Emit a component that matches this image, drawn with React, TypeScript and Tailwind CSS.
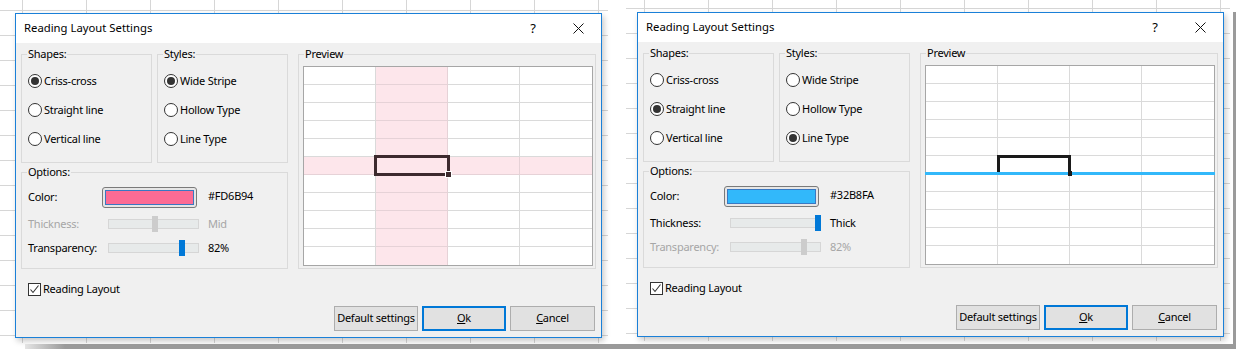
import React from "react";

type Props = {
	shape: number;
	style: number;
	color: string;
	hex: string;
	thickness: { pos: number; on: boolean; text: string };
	transparency: { pos: number; on: boolean; text: string };
	preview: "cross" | "line";
};

const GroupBox = ({
	label,
	className,
	children,
}: {
	label: string;
	className: string;
	children?: React.ReactNode;
}) => (
	<div className={`relative border border-[#dadada] ${className}`}>
		<span className="absolute -top-[8px] left-[5px] bg-[#f0f0f0] px-[1px] leading-[14px]">
			{label}
		</span>
		{children}
	</div>
);

const Radio = ({ checked, label }: { checked: boolean; label: string }) => (
	<div className="flex items-center h-[14px]">
		<span className="w-[14px] h-[14px] rounded-full border border-[#333333] bg-white flex items-center justify-center">
			{checked && <span className="w-[8px] h-[8px] rounded-full bg-[#333333]" />}
		</span>
		<span className="ml-[2px] leading-[14px]">{label}</span>
	</div>
);

const Slider = ({ pos, on }: { pos: number; on: boolean }) => (
	<div className="relative w-[91px] h-[10px] bg-[#e7eaea] border border-[#d6d6d6]">
		<span
			className={`absolute -top-[4px] w-[6px] h-[16px] ${on ? "bg-[#0078d7]" : "bg-[#cccccc]"}`}
			style={{ left: pos }}
		/>
	</div>
);

const Preview = ({ variant }: { variant: "cross" | "line" }) => {
	const cells = [];
	for (let r = 0; r < 11; r++) {
		for (let c = 0; c < 4; c++) {
			const pink = variant === "cross" && (c === 1 || r === 5);
			cells.push(
				<div
					key={`${r}-${c}`}
					className={[
						c < 3 ? "border-r" : "",
						r < 10 ? "border-b" : "",
						pink ? "bg-[#fde6eb] border-[#e6d2d7]" : "bg-white border-[#dadada]",
					].join(" ")}
				/>,
			);
		}
	}
	return (
		<div className="relative w-[290px] h-[200px] border border-[#a6a6a6] grid grid-cols-4 grid-rows-[repeat(11,1fr)]">
			{cells}
			{variant === "cross" ? (
				<>
					<div className="absolute left-[70px] top-[88px] w-[76px] h-[21px] border-[3px] border-[#3d2a2e]" />
					<div className="absolute left-[142px] top-[105px] w-[5px] h-[5px] bg-[#3d2a2e] outline outline-1 outline-white" />
				</>
			) : (
				<>
					<div className="absolute left-[71px] top-[89px] w-[74px] h-[18px] border-[3px] border-b-0 border-[#1a1a1a]" />
					<div className="absolute -left-[1px] -right-[1px] top-[106px] h-[3px] bg-[#32b8fa]" />
					<div className="absolute left-[142px] top-[105px] w-[4px] h-[5px] bg-[#1a1a1a]" />
				</>
			)}
		</div>
	);
};

const Dialog = (p: Props) => (
	<div className="w-[587px] h-[325px] border border-[#1a80d8] bg-[#f0f0f0] flex flex-col shadow-[2px_3px_6px_rgba(0,0,0,0.22)]">
		<div className="h-[29px] bg-white flex items-center pl-[8px] pr-[17px] text-[11.3px] tracking-normal">
			<span>Reading Layout Settings</span>
			<span className="ml-auto text-[13px]">?</span>
			<svg width="11" height="11" viewBox="0 0 11 11" className="ml-[37px]">
				<path d="M0.5 0.5L10.5 10.5M10.5 0.5L0.5 10.5" stroke="#111" strokeWidth="1" />
			</svg>
		</div>
		<div className="flex-1 px-[5px] pt-[11px]">
			<div className="flex">
				<div className="w-[267px] flex flex-col">
					<div className="flex gap-[5px]">
						<GroupBox label="Shapes:" className="w-[131px] h-[109px] pl-[6px] pt-[19px]">
							<div className="flex flex-col gap-[15px]">
								<Radio checked={p.shape === 0} label="Criss-cross" />
								<Radio checked={p.shape === 1} label="Straight line" />
								<Radio checked={p.shape === 2} label="Vertical line" />
							</div>
						</GroupBox>
						<GroupBox label="Styles:" className="w-[131px] h-[109px] pl-[6px] pt-[19px]">
							<div className="flex flex-col gap-[15px]">
								<Radio checked={p.style === 0} label="Wide Stripe" />
								<Radio checked={p.style === 1} label="Hollow Type" />
								<Radio checked={p.style === 2} label="Line Type" />
							</div>
						</GroupBox>
					</div>
					<GroupBox label="Options:" className="mt-[9px] h-[97px] pl-[6px] pt-[14px]">
						<div className="flex items-center h-[21px]">
							<span className="w-[74px]">Color:</span>
							<div className="w-[95px] h-[21px] rounded-[3px] border border-[#7a7a7a] bg-[#e6e6e6] p-[2px]">
								<div
									className="w-full h-full border border-[#3a78c2]"
									style={{ backgroundColor: p.color }}
								/>
							</div>
							<span className="ml-[11px] -mt-[3px]">{p.hex}</span>
						</div>
						<div className="flex items-center h-[16px] mt-[8px]">
							<span className={`w-[80px] ${p.thickness.on ? "" : "text-[#a6a6a6]"}`}>Thickness:</span>
							<Slider pos={p.thickness.pos} on={p.thickness.on} />
							<span className={`ml-[9px] ${p.thickness.on ? "" : "text-[#a6a6a6]"}`}>
								{p.thickness.text}
							</span>
						</div>
						<div className="flex items-center h-[16px] mt-[8px]">
							<span className={`w-[80px] ${p.transparency.on ? "" : "text-[#a6a6a6]"}`}>
								Transparency:
							</span>
							<Slider pos={p.transparency.pos} on={p.transparency.on} />
							<span className={`ml-[9px] ${p.transparency.on ? "" : "text-[#a6a6a6]"}`}>
								{p.transparency.text}
							</span>
						</div>
					</GroupBox>
				</div>
				<GroupBox label="Preview" className="ml-[10px] w-[300px] h-[215px] pl-[4px] pt-[11px]">
					<Preview variant={p.preview} />
				</GroupBox>
			</div>
			<div className="flex items-center mt-[14px] ml-[7px] h-[13px]">
				<span className="w-[13px] h-[13px] border border-[#333333] bg-white flex items-center justify-center">
					<svg width="11" height="11" viewBox="0 0 11 11">
						<path d="M1.5 5.5L4 8.5L9.5 1.5" fill="none" stroke="#333" strokeWidth="1.1" />
					</svg>
				</span>
				<span className="ml-[2px]">Reading Layout</span>
			</div>
			<div className="flex justify-end gap-[4px] pr-[1px] mt-[10px]">
				<button type="button" className="w-[84px] h-[25px] bg-[#e1e1e1] border border-[#adadad]">
					Default settings
				</button>
				<button type="button" className="w-[84px] h-[25px] bg-[#e1e1e1] border-2 border-[#0078d7]">
					<span className="underline">O</span>k
				</button>
				<button type="button" className="w-[85px] h-[25px] bg-[#e1e1e1] border border-[#adadad]">
					<span className="underline">C</span>ancel
				</button>
			</div>
		</div>
	</div>
);

const sheet =
	"bg-white bg-[linear-gradient(to_right,#d6d6d6_1px,transparent_1px),linear-gradient(to_bottom,#d6d6d6_1px,transparent_1px)] bg-size-[64px_25px]";

export default function App() {
	return (
		<div className="w-[1236px] h-[349px] bg-white overflow-hidden flex flex-col text-[11px] tracking-[-0.25px] text-black font-['Noto_Sans',sans-serif]">
			<div className="flex h-[344px]">
				<div className={`w-[608px] h-[343px] pl-[15px] pt-[13px] ${sheet} bg-position-[22px_10px]`}>
					<Dialog
						shape={0}
						style={0}
						color="#fd6b94"
						hex="#FD6B94"
						thickness={{ pos: 43, on: false, text: "Mid" }}
						transparency={{ pos: 70, on: true, text: "82%" }}
						preview="cross"
					/>
				</div>
				<div className="w-[18px]" />
				<div className={`w-[604px] h-[341px] pl-[11px] pt-[12px] ${sheet} bg-position-[18px_8px]`}>
					<Dialog
						shape={1}
						style={2}
						color="#32b8fa"
						hex="#32B8FA"
						thickness={{ pos: 84, on: true, text: "Thick" }}
						transparency={{ pos: 70, on: false, text: "82%" }}
						preview="line"
					/>
				</div>
				<div className="w-[3px]" />
				<div className="w-[3px] mt-[12px] h-[332px] bg-[#9a9a9a]" />
			</div>
			<div className="ml-[25px] h-[5px] bg-[linear-gradient(to_right,#e4e4e4,#9a9a9a_40px)]" />
		</div>
	);
}
